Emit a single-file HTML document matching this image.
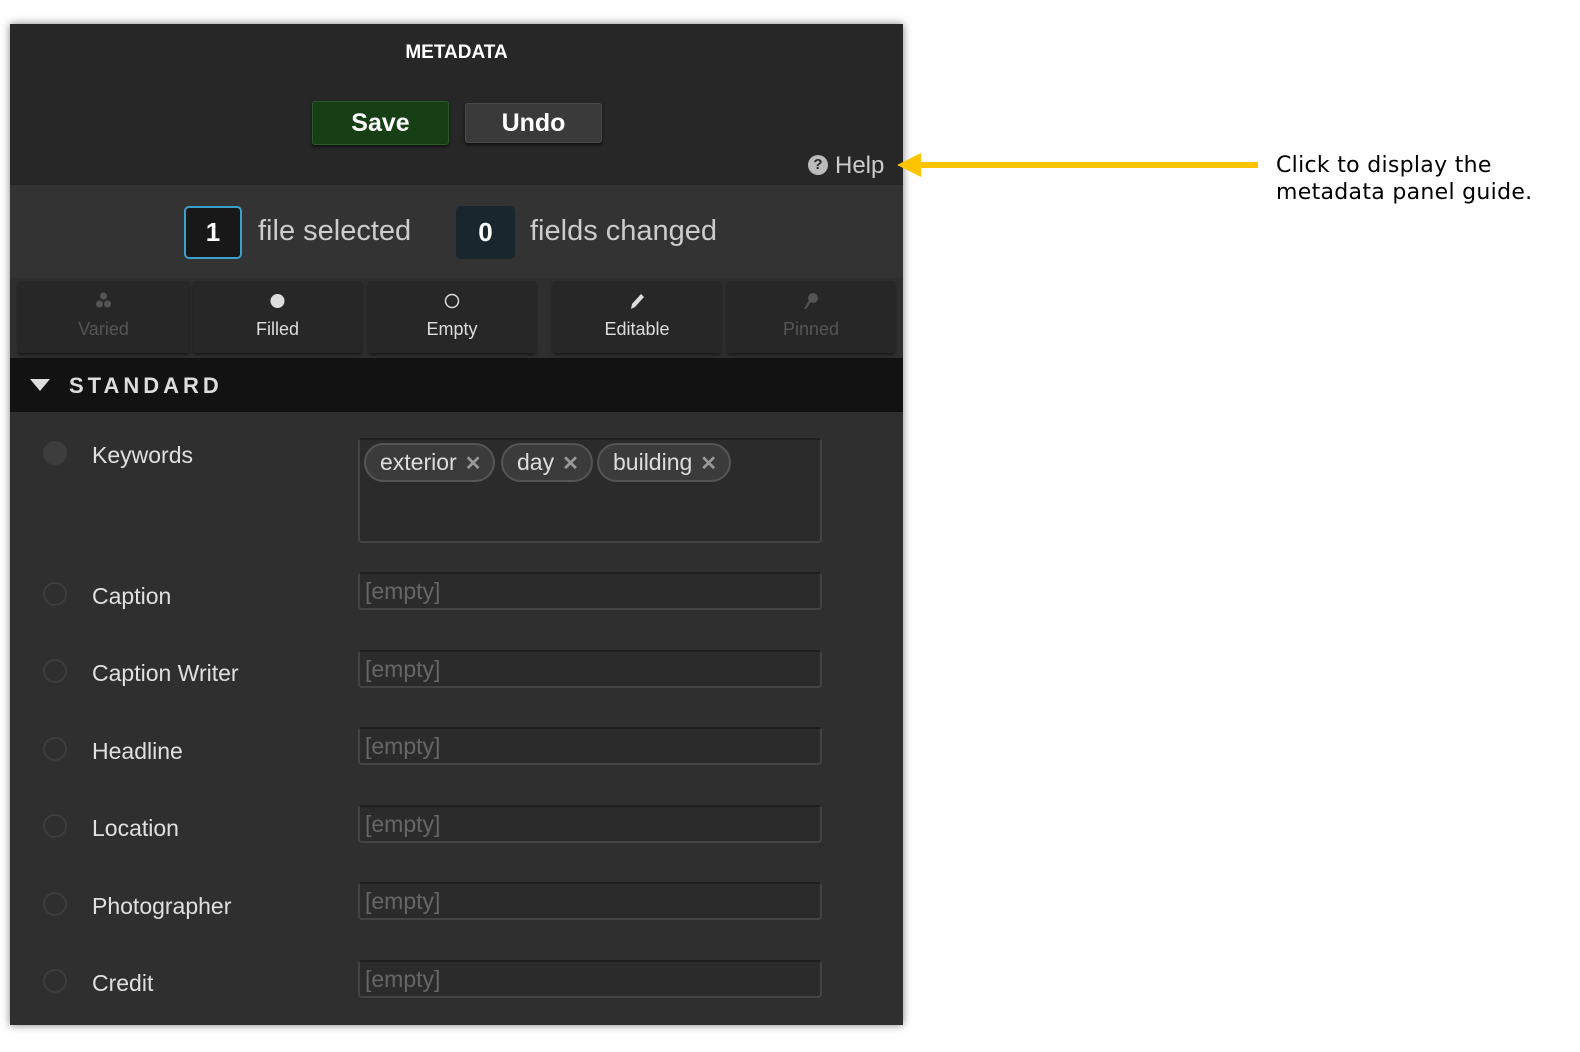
<!DOCTYPE html>
<html><head><style>
*{margin:0;padding:0;box-sizing:border-box}
body{width:1580px;height:1052px;background:#fff;position:relative;overflow:hidden;font-family:"Liberation Sans",sans-serif}
.a{position:absolute}
.panel{left:10px;top:24px;width:893px;height:1001px;background:#2f2f2f;box-shadow:0 0 8px rgba(0,0,0,.5)}
.lbl{color:#e0e0e0;font-size:23px;left:92px}
.circ{left:43px;width:24px;height:24px;border-radius:50%;border:2px solid #3d3d3d}
.inp{left:358px;width:464px;height:38px;border:2px solid #444;border-top-color:#1e1e1e;border-radius:4px;background:#2b2b2b;color:#666;font-size:23px;padding-left:5px;line-height:34px}
.tab{top:281px;height:72px;background:#272727;border-radius:3px;box-shadow:0 2px 3px rgba(0,0,0,.5);color:#ddd;font-size:18px;text-align:center}
.tab .t{position:absolute;left:0;right:0;top:38px}
.tab .i{position:absolute;left:0;right:0;top:10px;height:20px}
.pill{top:443px;height:39px;border-radius:20px;background:#3b3b3b;border:2px solid #555;color:#ddd;font-size:23px;line-height:35px;padding:0 12px 0 14px}
.pill span{color:#999;font-size:20px;margin-left:8px;font-weight:bold}
</style></head><body>
<div class="a panel"></div>
<div class="a" style="left:10px;top:24px;width:893px;height:161px;background:#272727"></div>
<div class="a" style="left:10px;top:42px;width:893px;text-align:center;color:#fff;font-size:19px;font-weight:bold">METADATA</div>
<div class="a" style="left:312px;top:101px;width:137px;height:44px;background:#163f15;border:1px solid #2a5a28;border-radius:3px;color:#fff;font-size:25px;font-weight:bold;text-align:center;line-height:42px;box-shadow:0 2px 3px rgba(0,0,0,.6)">Save</div>
<div class="a" style="left:465px;top:103px;width:137px;height:40px;background:#3a3a3a;border:1px solid #4a4a4a;border-radius:3px;color:#fff;font-size:25px;font-weight:bold;text-align:center;line-height:38px;box-shadow:0 2px 3px rgba(0,0,0,.6)">Undo</div>
<div class="a" style="left:808px;top:155px;width:20px;height:20px;border-radius:50%;background:#bbb;color:#272727;font-size:15px;font-weight:bold;text-align:center;line-height:20px">?</div>
<div class="a" style="left:835px;top:152px;color:#ccc;font-size:24px">Help</div>
<div class="a" style="left:10px;top:185px;width:893px;height:93px;background:#333"></div>
<div class="a" style="left:184px;top:206px;width:58px;height:53px;border:2px solid #3aa0d0;border-radius:5px;background:#181818;color:#fff;font-size:26px;font-weight:bold;text-align:center;line-height:49px">1</div>
<div class="a" style="left:258px;top:215px;color:#ccc;font-size:29px">file selected</div>
<div class="a" style="left:456px;top:206px;width:59px;height:53px;border-radius:5px;background:#19262e;color:#fff;font-size:26px;font-weight:bold;text-align:center;line-height:53px">0</div>
<div class="a" style="left:530px;top:215px;color:#ccc;font-size:29px">fields changed</div>
<div class="a tab" style="left:18px;width:171px;color:#555"><svg class="i" viewBox="0 0 20 20" width="171" height="20"><circle cx="10" cy="5" r="3.5" fill="#555"/><circle cx="6" cy="13" r="3.5" fill="#555"/><circle cx="14" cy="13" r="3.5" fill="#555"/></svg><div class="t">Varied</div></div>
<div class="a tab" style="left:193px;width:169px"><svg class="i" viewBox="0 0 20 20" width="169" height="20"><circle cx="10" cy="10" r="7" fill="#ddd"/></svg><div class="t">Filled</div></div>
<div class="a tab" style="left:368px;width:168px"><svg class="i" viewBox="0 0 20 20" width="168" height="20"><circle cx="10" cy="10" r="6.5" fill="none" stroke="#ddd" stroke-width="1.5"/></svg><div class="t">Empty</div></div>
<div class="a tab" style="left:553px;width:168px"><svg class="i" viewBox="0 0 20 20" width="168" height="20"><path d="M4 18 L5 13 L14 3 L17 6 L8 16 Z" fill="#ddd"/></svg><div class="t">Editable</div></div>
<div class="a tab" style="left:727px;width:168px;color:#555"><svg class="i" viewBox="0 0 20 20" width="168" height="20"><circle cx="12" cy="7" r="5" fill="#555"/><path d="M9 10 L4 18" stroke="#555" stroke-width="2"/></svg><div class="t">Pinned</div></div>
<div class="a" style="left:10px;top:358px;width:893px;height:54px;background:#121212"></div>
<div class="a" style="left:30px;top:379px;width:0;height:0;border-left:10px solid transparent;border-right:10px solid transparent;border-top:12px solid #ddd"></div>
<div class="a" style="left:69px;top:373px;color:#ddd;font-size:22px;font-weight:bold;letter-spacing:4px">STANDARD</div>

<div class="a circ" style="top:441px;background:#3d3d3d"></div>
<div class="a lbl" style="top:442px">Keywords</div>
<div class="a inp" style="top:438px;height:105px"></div>
<div class="a pill" style="left:364px">exterior<span>✕</span></div>
<div class="a pill" style="left:501px">day<span>✕</span></div>
<div class="a pill" style="left:597px">building<span>✕</span></div>

<div class="a circ" style="top:582px"></div><div class="a lbl" style="top:583px">Caption</div><div class="a inp" style="top:572px">[empty]</div>
<div class="a circ" style="top:659px"></div><div class="a lbl" style="top:660px">Caption Writer</div><div class="a inp" style="top:650px">[empty]</div>
<div class="a circ" style="top:737px"></div><div class="a lbl" style="top:738px">Headline</div><div class="a inp" style="top:727px">[empty]</div>
<div class="a circ" style="top:814px"></div><div class="a lbl" style="top:815px">Location</div><div class="a inp" style="top:805px">[empty]</div>
<div class="a circ" style="top:892px"></div><div class="a lbl" style="top:893px">Photographer</div><div class="a inp" style="top:882px">[empty]</div>
<div class="a circ" style="top:969px"></div><div class="a lbl" style="top:970px">Credit</div><div class="a inp" style="top:960px">[empty]</div>

<div class="a" style="left:918px;top:162px;width:340px;height:6px;background:#ffc400"></div>
<div class="a" style="left:897px;top:153px;width:0;height:0;border-top:12px solid transparent;border-bottom:12px solid transparent;border-right:24px solid #ffc400"></div>
<div class="a" style="left:1276px;top:152px;color:#000;font-size:22px;line-height:27px;font-family:'DejaVu Sans',sans-serif;letter-spacing:0.3px">Click to display the<br>metadata panel guide.</div>
</body></html>
